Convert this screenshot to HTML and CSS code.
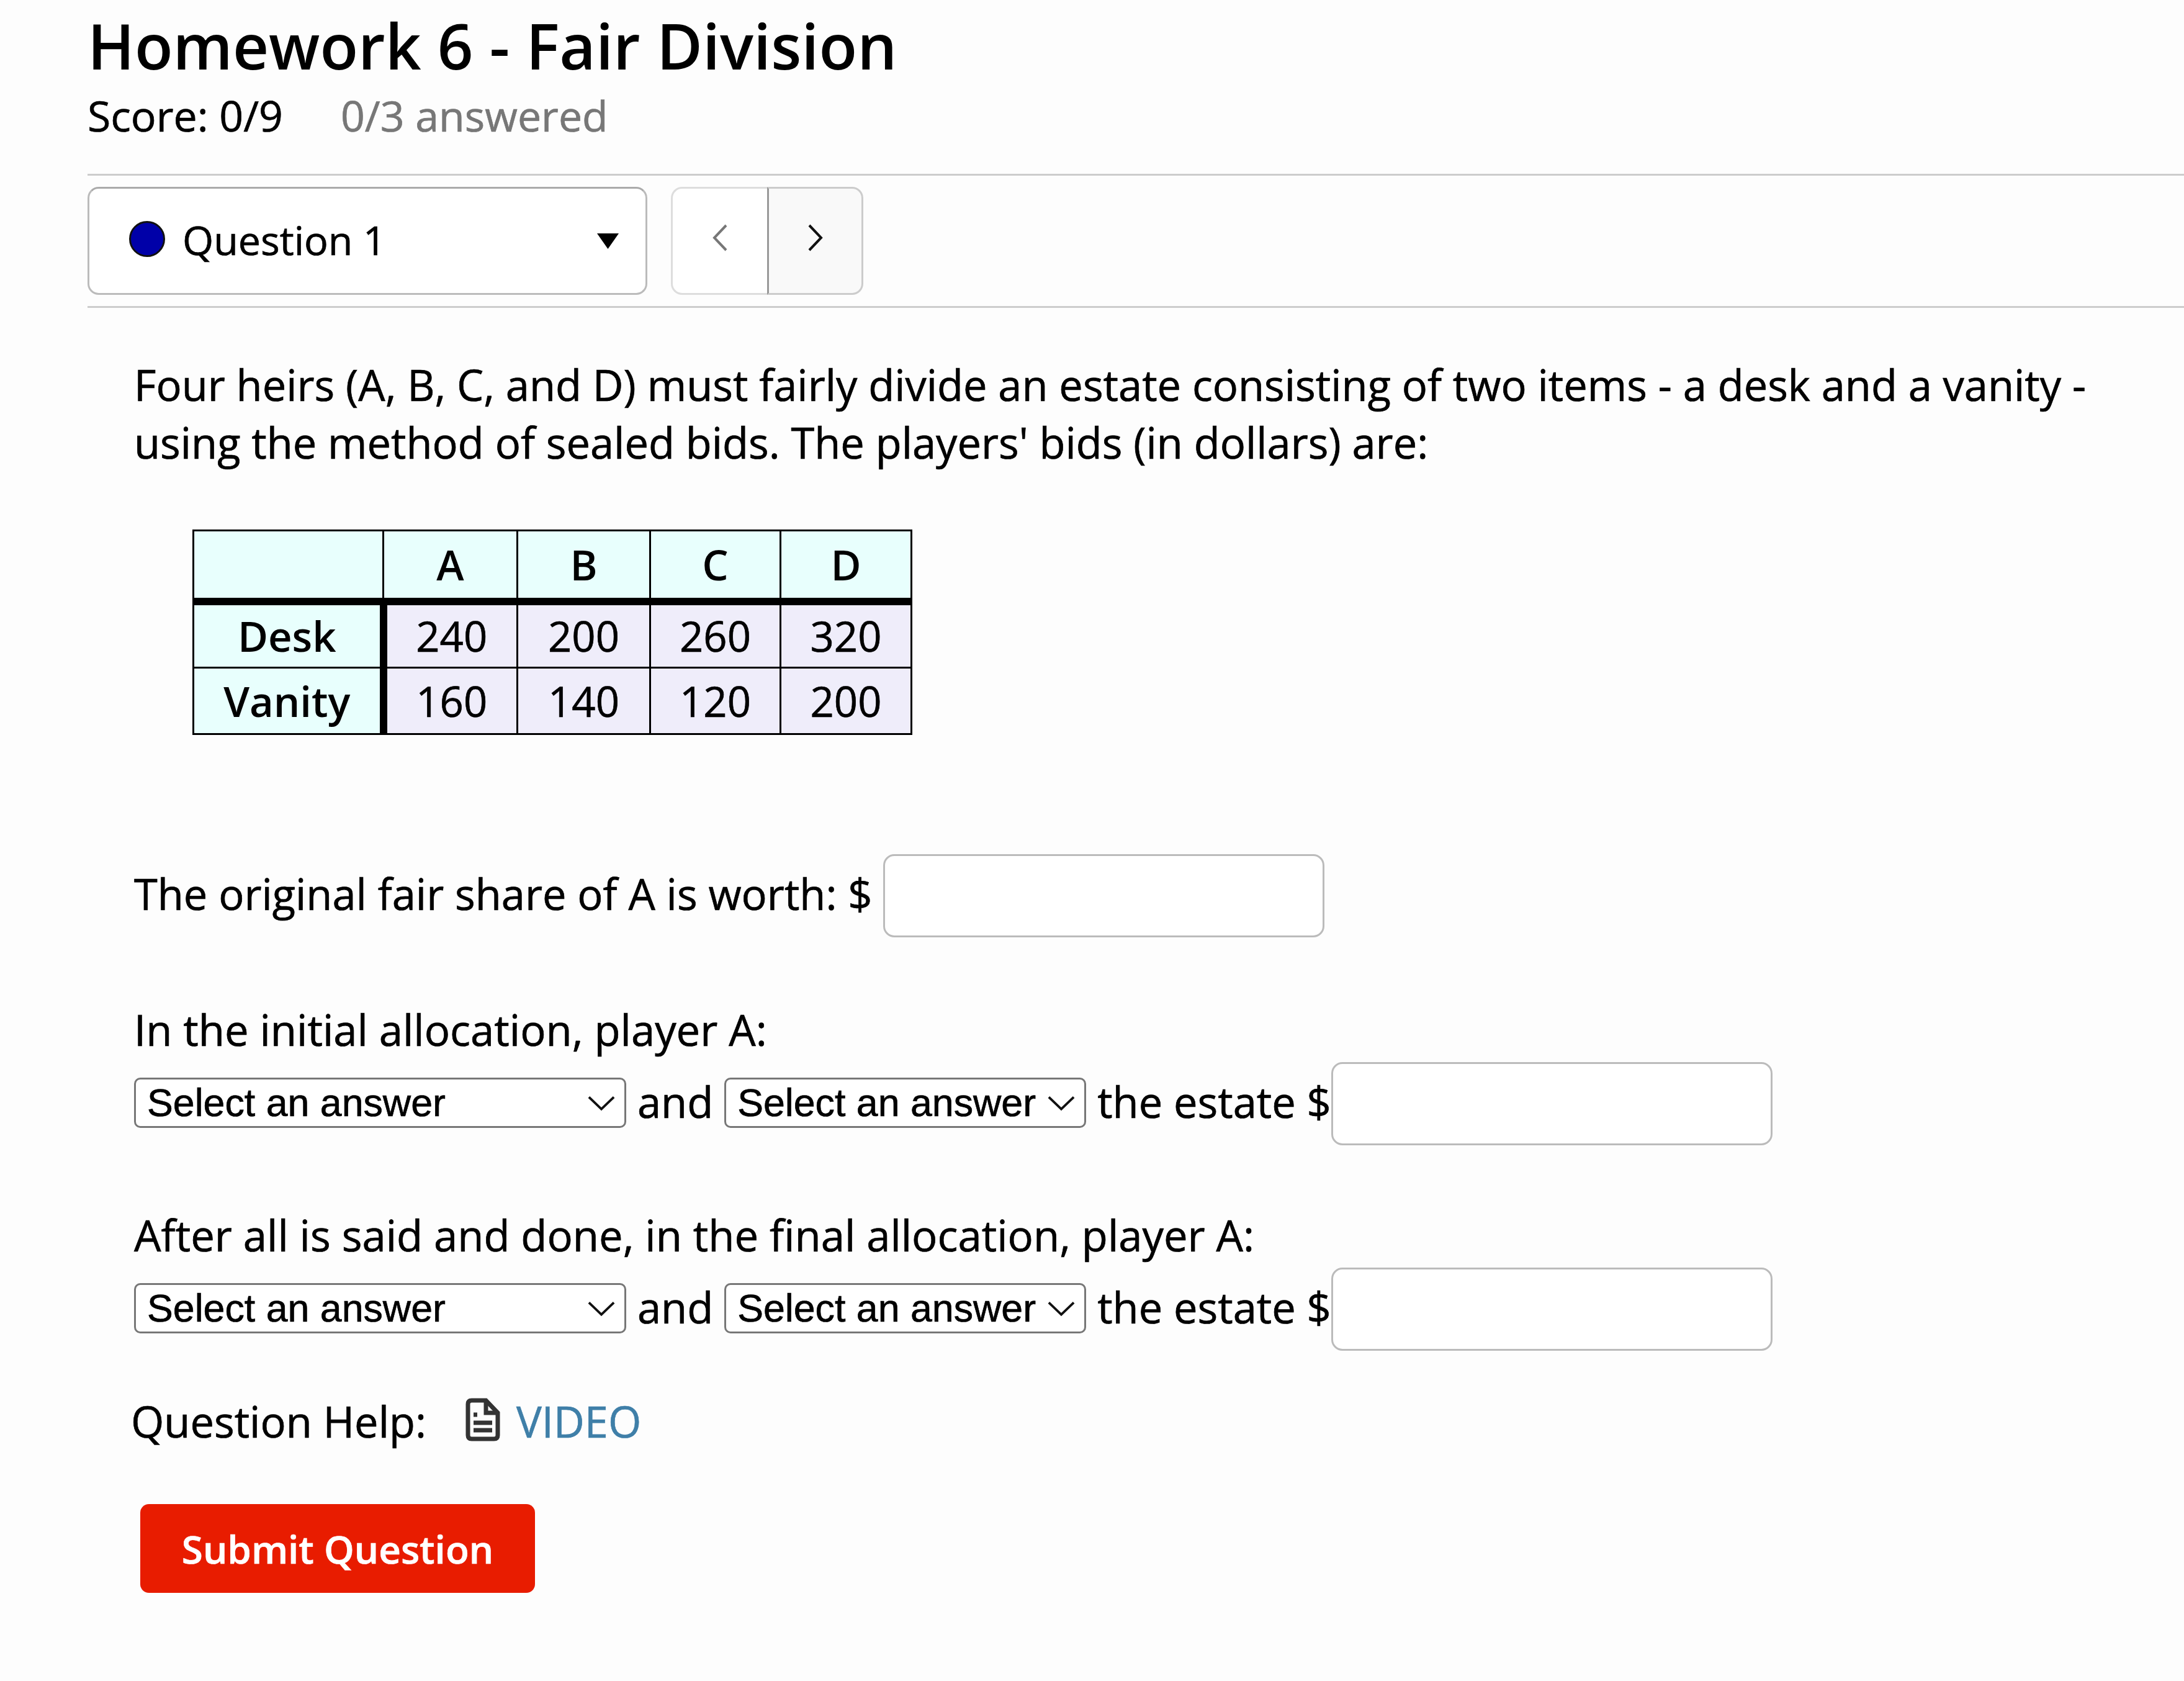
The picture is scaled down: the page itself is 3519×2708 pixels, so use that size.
FILE: index.html
```html
<!DOCTYPE html>
<html lang="en">
<head>
  <meta charset="UTF-8">
  <title>Homework 6 - Fair Division</title>
  <link rel="stylesheet" href="styles.css">
</head>
<body>
  <div class="page">
    <h1>Homework 6 - Fair Division</h1>
    <div class="score-row">
      <span>Score: 0/9</span>
      <span class="answered">0/3 answered</span>
    </div>

    <div class="nav-bar">
      <div class="question-select">
        <span class="dot"></span>
        <span class="question-name">Question 1</span>
        <svg class="caret" viewBox="0 0 35 25"><path d="M0 0H35L17.5 25Z"/></svg>
      </div>
      <div class="pager">
        <button class="pager-btn" aria-label="Previous">
          <svg viewBox="0 0 26 44"><path class="chev-off" d="M23 2L4 22L23 42"/></svg>
        </button>
        <button class="pager-btn next" aria-label="Next">
          <svg viewBox="0 0 26 44"><path class="chev-on" d="M3 2L22 22L3 42"/></svg>
        </button>
      </div>
    </div>

    <div class="question">
      <p class="intro">Four heirs (A, B, C, and D) must fairly divide an estate consisting of two items - a desk and a vanity - using the method of sealed bids. The players' bids (in dollars) are:</p>

      <table class="bids">
        <thead>
          <tr><th class="corner"></th><th class="col-a">A</th><th class="col-b">B</th><th class="col-c">C</th><th class="col-d">D</th></tr>
        </thead>
        <tbody>
          <tr><th>Desk</th><td>240</td><td>200</td><td>260</td><td>320</td></tr>
          <tr><th>Vanity</th><td>160</td><td>140</td><td>120</td><td>200</td></tr>
        </tbody>
      </table>

      <div class="fair-share">
        <span class="lift">The original fair share of A is worth: $</span>
        <input class="answer" type="text">
      </div>

      <p class="prompt first">In the initial allocation, player A:</p>
      <div class="answer-row">
        <span class="select-wrap wide">
          <select><option>Select an answer</option></select>
          <svg viewBox="0 0 46 26"><path d="M2 3L23 23L44 3"/></svg>
        </span>
        <span class="lift">and</span>
        <span class="select-wrap narrow">
          <select><option>Select an answer</option></select>
          <svg viewBox="0 0 46 26"><path d="M2 3L23 23L44 3"/></svg>
        </span>
        <span class="lift">the estate $</span>
        <input class="answer tight" type="text">
      </div>

      <p class="prompt">After all is said and done, in the final allocation, player A:</p>
      <div class="answer-row">
        <span class="select-wrap wide">
          <select><option>Select an answer</option></select>
          <svg viewBox="0 0 46 26"><path d="M2 3L23 23L44 3"/></svg>
        </span>
        <span class="lift">and</span>
        <span class="select-wrap narrow">
          <select><option>Select an answer</option></select>
          <svg viewBox="0 0 46 26"><path d="M2 3L23 23L44 3"/></svg>
        </span>
        <span class="lift">the estate $</span>
        <input class="answer tight" type="text">
      </div>

      <div class="help">
        <span>Question Help:</span>
        <svg class="doc" viewBox="0 0 56 70">
          <path d="M10 4H33L52 24V60Q52 66 46 66H10Q4 66 4 60V10Q4 4 10 4Z"/>
          <path d="M33 4V24H52"/>
          <path d="M13 27H19M13 40H43M13 52H43"/>
        </svg>
        <a href="#">VIDEO</a>
      </div>

      <button class="submit">Submit Question</button>
    </div>
  </div>
</body>
</html>
```

FILE: styles.css
```css
* {
  margin: 0;
  padding: 0;
  box-sizing: border-box;
}

body {
  font-family: 'Open Sans', sans-serif;
  font-size: 68.6px;
  -webkit-text-stroke: 0.7px;
  background: #fdfdfd;
  color: #000;
  overflow: hidden;
}

.page {
  margin-left: 141px;
}

h1 {
  font-size: 101px;
  font-weight: 600;
  line-height: 146px;
  -webkit-text-stroke: 0;
}

.score-row {
  display: flex;
  gap: 93px;
  height: 134px;
  line-height: 80px;
  font-size: 68px;
}

.answered {
  color: #777;
}

.nav-bar {
  display: flex;
  align-items: center;
  gap: 38px;
  height: 216px;
  border-top: 3px solid #ccc;
  border-bottom: 3px solid #ccc;
}

.question-select {
  display: flex;
  align-items: center;
  width: 902px;
  height: 174px;
  padding: 0 43px 0 64px;
  background: #fff;
  border: 3px solid #bbb;
  border-top-color: #aaa;
  border-radius: 18px;
}

.dot {
  width: 58px;
  height: 58px;
  margin-top: -6px;
  background: #0000a8;
  border: 3px solid #111;
  border-radius: 50%;
}

.question-name {
  flex: 1;
  margin-left: 28px;
  margin-top: -4px;
  font-size: 64.5px;
}

.caret {
  width: 35px;
  height: 25px;
}

.pager {
  display: flex;
  height: 174px;
}

.pager-btn {
  display: flex;
  align-items: center;
  justify-content: center;
  width: 155px;
  padding-bottom: 10px;
  background: #fff;
  border: 3px solid #ddd;
  border-right: none;
  border-radius: 18px 0 0 18px;
}

.pager-btn svg {
  width: 26px;
  height: 44px;
}

.pager-btn.next {
  background: #f9f9f9;
  border: 3px solid #ccc;
  border-left-color: #999;
  border-radius: 0 18px 18px 0;
}

.chev-off,
.chev-on {
  fill: none;
  stroke-width: 4;
}

.chev-off {
  stroke: #777;
}

.chev-on {
  stroke: #111;
}

.question {
  padding-left: 75px;
}

.intro {
  width: 3200px;
  margin-top: 77px;
  line-height: 93px;
}

.bids {
  margin: 94px 0 0 94px;
  border-collapse: collapse;
  table-layout: fixed;
  width: 1157px;
  font-size: 67px;
}

.bids th,
.bids td {
  border: 3px solid #000;
  text-align: center;
  font-weight: 600;
  height: 107px;
}

.bids td {
  background: #efedfa;
  font-weight: 400;
}

.bids th {
  background: #e8fffd;
  -webkit-text-stroke: 0;
}

.bids thead th {
  height: 114px;
  border-bottom: 12px solid #000;
}

.bids tbody th {
  border-right: 12px solid #000;
}

.corner {
  width: 306px;
}

.col-a {
  width: 216px;
}

.col-b {
  width: 214px;
}

.col-c {
  width: 210px;
}

.col-d {
  width: 211px;
}

.lift {
  padding-bottom: 8px;
}

.fair-share {
  display: flex;
  align-items: center;
  gap: 18px;
  margin-top: 192px;
}

.answer {
  width: 711px;
  height: 134px;
  background: #fff;
  border: 3px solid #bbb;
  border-radius: 18px;
}

.answer.tight {
  margin-left: -18px;
}

.prompt {
  margin-top: 98px;
  line-height: 93px;
  font-size: 68.8px;
}

.prompt.first {
  margin-top: 102px;
}

.answer-row {
  display: flex;
  align-items: center;
  gap: 18px;
  margin-top: 6px;
}

.select-wrap {
  position: relative;
  display: block;
  height: 81px;
  margin-top: -4px;
}

.select-wrap.wide {
  width: 793px;
}

.select-wrap.narrow {
  width: 583px;
}

.select-wrap select {
  appearance: none;
  display: block;
  width: 100%;
  height: 100%;
  padding-left: 18px;
  font-family: 'Liberation Sans', Arial, sans-serif;
  font-size: 62.7px;
  color: #000;
  background: #fff;
  border: 3px solid #777;
  border-radius: 10px;
}

.select-wrap svg {
  position: absolute;
  top: 28px;
  right: 18px;
  width: 44px;
  height: 26px;
  fill: none;
  stroke: #111;
  stroke-width: 4;
}

.help {
  display: flex;
  align-items: center;
  margin: 67px 0 0 -5px;
  height: 93px;
}

.doc {
  width: 56px;
  height: 70px;
  margin: -6px 26px 0 63px;
  fill: none;
  stroke: #333;
  stroke-width: 7;
}

.help a {
  color: #3f7fa8;
  text-decoration: none;
}

.submit {
  display: block;
  width: 636px;
  height: 143px;
  margin: 87px 0 0 10px;
  font-family: 'Open Sans', sans-serif;
  font-size: 62px;
  font-weight: 600;
  color: #fff;
  background: #e81c00;
  border: none;
  border-radius: 14px;
}
```
